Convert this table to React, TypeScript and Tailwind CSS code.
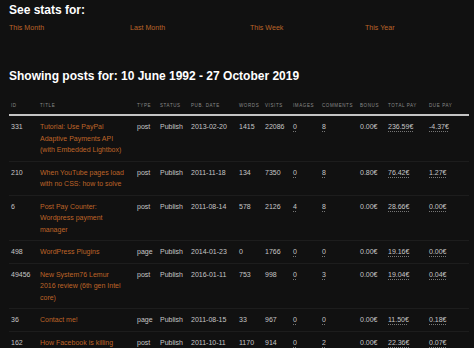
import React from 'react';

type Post = {
  id: number;
  title: string;
  type: string;
  date: string;
  words: number;
  visits: number;
  images: number;
  comments: number;
  bonus: string;
  total: string;
  due: string;
};

const posts: Post[] = [
  { id: 331, title: 'Tutorial: Use PayPal Adaptive Payments API (with Embedded Lightbox)', type: 'post', date: '2013-02-20', words: 1415, visits: 22086, images: 0, comments: 8, bonus: '0.00€', total: '236.59€', due: '-4.37€' },
  { id: 210, title: 'When YouTube pages load with no CSS: how to solve', type: 'post', date: '2011-11-18', words: 134, visits: 7350, images: 0, comments: 8, bonus: '0.80€', total: '76.42€', due: '1.27€' },
  { id: 6, title: 'Post Pay Counter: Wordpress payment manager', type: 'post', date: '2011-08-14', words: 578, visits: 2126, images: 4, comments: 8, bonus: '0.00€', total: '28.66€', due: '0.00€' },
  { id: 498, title: 'WordPress Plugins', type: 'page', date: '2014-01-23', words: 0, visits: 1766, images: 0, comments: 0, bonus: '0.00€', total: '19.16€', due: '0.00€' },
  { id: 49456, title: 'New System76 Lemur 2016 review (6th gen Intel core)', type: 'post', date: '2016-01-11', words: 753, visits: 998, images: 0, comments: 3, bonus: '0.00€', total: '19.04€', due: '0.04€' },
  { id: 36, title: 'Contact me!', type: 'page', date: '2011-08-15', words: 33, visits: 967, images: 0, comments: 0, bonus: '0.00€', total: '11.50€', due: '0.18€' },
  // the original font wraps this one a word earlier
  { id: 162, title: 'How Facebook is killing\nthe web', type: 'post', date: '2011-10-11', words: 1170, visits: 914, images: 0, comments: 2, bonus: '0.00€', total: '22.36€', due: '0.07€' },
];

const columns = [
  { label: 'ID', w: 'w-[29px]' },
  { label: 'Title', w: 'w-[97px]' },
  { label: 'Type', w: 'w-[23px]' },
  { label: 'Status', w: 'w-[31px]' },
  { label: 'Pub. Date', w: 'w-[48px]' },
  { label: 'Words', w: 'w-[26px]' },
  { label: 'Visits', w: 'w-[28px]' },
  { label: 'Images', w: 'w-[29px]' },
  { label: 'Comments', w: 'w-[38px]' },
  { label: 'Bonus', w: 'w-[28px]' },
  { label: 'Total Pay', w: 'w-[41px]' },
  { label: 'Due Pay', w: 'w-[42px]' },
];

const Dotted: React.FC<{ children: React.ReactNode }> = ({ children }) => (
  <span className="underline decoration-dotted decoration-[#777] underline-offset-[2px]">{children}</span>
);

export default function App() {
  const cell = 'px-[2px] py-[5px] align-top';

  return (
    <div className="w-[474px] h-[348px] overflow-hidden bg-[#111111] px-[9px] font-['Liberation_Sans',Arial,sans-serif] text-[#c6c6c6]">
      <h2 className="pt-[3px] text-[12px] font-bold leading-[14px] text-white">See stats for:</h2>
      <div className="mt-[6.5px] flex text-[7.1px] leading-[9px] text-[#bb6429]">
        <span className="w-[121px]">This Month</span>
        <span className="w-[120px]">Last Month</span>
        <span className="w-[115px]">This Week</span>
        <span>This Year</span>
      </div>

      <h2 className="mt-[36.5px] text-[12px] font-bold leading-[14px] text-white">
        Showing posts for: 10 June 1992 - 27 October 2019
      </h2>

      <table className="mt-[16px] w-[460px] table-fixed border-collapse text-[7px] leading-[11.5px]">
        <colgroup>
          {columns.map(c => (
            <col key={c.label} className={c.w} />
          ))}
        </colgroup>
        <thead>
          <tr className="border-b-2 border-[#c4c4c4]">
            {columns.map(c => (
              <th
                key={c.label}
                className="px-[2px] pt-[4px] pb-[5px] text-left text-[4.5px] font-normal uppercase leading-[6px] tracking-[0.6px] text-[#8a8a8a] whitespace-nowrap"
              >
                {c.label}
              </th>
            ))}
          </tr>
        </thead>
        <tbody>
          {posts.map(p => (
            <tr key={p.id} className="border-b border-[#1d1d1d]">
              <td className={cell}>{p.id}</td>
              <td className={cell}>
                <div className="w-[85.5px] whitespace-pre-line text-[#bf6428]">{p.title}</div>
              </td>
              <td className={cell}>{p.type}</td>
              <td className={cell}>Publish</td>
              <td className={cell}>{p.date}</td>
              <td className={cell}>{p.words}</td>
              <td className={cell}>{p.visits}</td>
              <td className={cell}><Dotted>{p.images}</Dotted></td>
              <td className={cell}><Dotted>{p.comments}</Dotted></td>
              <td className={cell}>{p.bonus}</td>
              <td className={cell}><Dotted>{p.total}</Dotted></td>
              <td className={cell}><Dotted>{p.due}</Dotted></td>
            </tr>
          ))}
        </tbody>
      </table>
    </div>
  );
}
